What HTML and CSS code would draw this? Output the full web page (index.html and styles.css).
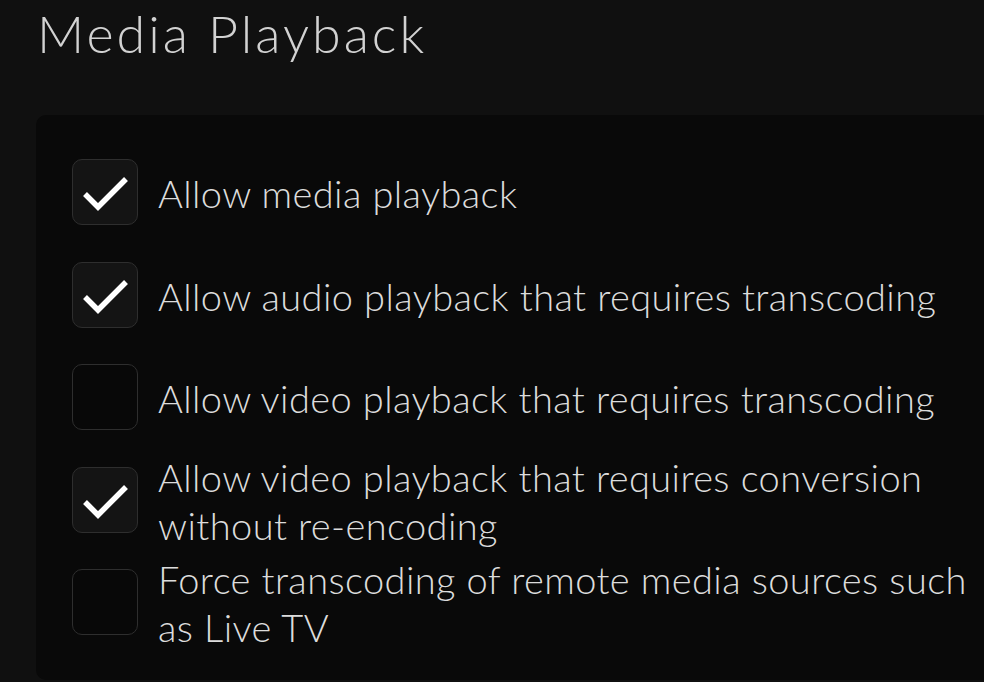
FILE: index.html
```html
<!DOCTYPE html>
<html lang="en">
<head>
<meta charset="utf-8">
<title>Media Playback</title>
<link rel="stylesheet" href="styles.css">
</head>
<body>
<div class="page">
  <h2 class="title">Media Playback</h2>
  <div class="card">
    <label class="row">
      <span class="box checked"><svg viewBox="0 0 64 64" class="tick"><path d="M12 34 L25 47 L53 19"/></svg></span>
      <span class="text">Allow media playback</span>
    </label>
    <label class="row">
      <span class="box checked"><svg viewBox="0 0 64 64" class="tick"><path d="M12 34 L25 47 L53 19"/></svg></span>
      <span class="text">Allow audio playback that requires transcoding</span>
    </label>
    <label class="row">
      <span class="box"></span>
      <span class="text">Allow video playback that requires transcoding</span>
    </label>
    <label class="row">
      <span class="box checked"><svg viewBox="0 0 64 64" class="tick"><path d="M12 34 L25 47 L53 19"/></svg></span>
      <span class="text">Allow video playback that requires conversion without re-encoding</span>
    </label>
    <label class="row">
      <span class="box"></span>
      <span class="text">Force transcoding of remote media sources such as Live TV</span>
    </label>
  </div>
</div>
</body>
</html>
```
FILE: styles.css
```css
html, body {
  margin: 0;
  padding: 0;
  background: #101010;
  overflow: hidden;
}
body {
  width: 984px;
  height: 682px;
  font-family: "Lato", "Noto Sans", sans-serif;
  font-weight: 300;
  color: #dcdcdc;
}
.page {
  padding: 0 0 0 36px;
}
.title {
  margin: 0;
  padding: 1px 0 0 1px;
  height: 115px;
  box-sizing: border-box;
  font-size: 52px;
  line-height: 64px;
  font-weight: 300;
  letter-spacing: 3px;
  color: #d2d2d2;
}
.card {
  background: #090909;
  border-radius: 10px 0 0 10px;
  height: 565px;
  box-sizing: border-box;
  padding: 26px 0 0 36px;
  display: flex;
  flex-direction: column;
}
.row {
  height: 102.5px;
  display: flex;
  align-items: center;
  gap: 20px;
  flex: none;
}
.box {
  width: 66px;
  height: 66px;
  box-sizing: border-box;
  border: 1px solid #2e2e2e;
  border-radius: 10px;
  background: #080808;
  flex: none;
  display: flex;
}
.box.checked {
  background: #141414;
}
.tick {
  width: 64px;
  height: 64px;
}
.tick path {
  fill: none;
  stroke: #ffffff;
  stroke-width: 5.5;
  stroke-linecap: butt;
  stroke-linejoin: miter;
}
.text {
  flex: 1;
  min-width: 0;
  font-size: 38px;
  line-height: 48px;
  letter-spacing: 0.4px;
  padding-top: 2px;
}
```
